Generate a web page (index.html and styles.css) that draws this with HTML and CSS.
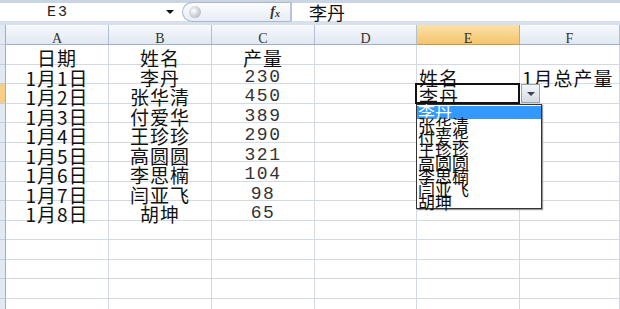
FILE: index.html
```html
<!DOCTYPE html>
<html lang="zh">
<head>
    <meta charset="UTF-8">
    <title>产量表</title>
    <link rel="stylesheet" href="styles.css">
</head>
<body>

  <!-- formula bar -->
  <div class="formula-bar">
    <div class="name-box">
      <span class="cell-ref">E3</span>
      <span class="caret"></span>
    </div>
    <div class="fx-pill">
      <span class="knob"></span>
      <span class="fx">f<span class="fx-x">x</span></span>
    </div>
    <div class="formula">李丹</div>
  </div>

  <!-- sheet -->
  <div class="sheet">
    <div class="row-head"></div>
    <div class="col-head">A</div>
    <div class="col-head">B</div>
    <div class="col-head">C</div>
    <div class="col-head">D</div>
    <div class="col-head active">E</div>
    <div class="col-head">F</div>

    <div class="row-head"></div>
    <div class="cell">日期</div><div class="cell">姓名</div><div class="cell">产量</div>
    <div class="cell"></div><div class="cell"></div><div class="cell"></div>

    <div class="row-head"></div>
    <div class="cell">1月1日</div><div class="cell">李丹</div><div class="cell num">230</div>
    <div class="cell"></div><div class="cell left">姓名</div><div class="cell left">1月总产量</div>

    <div class="row-head active"></div>
    <div class="cell">1月2日</div><div class="cell">张华清</div><div class="cell num">450</div>
    <div class="cell"></div><div class="cell left">李丹</div><div class="cell"></div>

    <div class="row-head"></div>
    <div class="cell">1月3日</div><div class="cell">付爱华</div><div class="cell num">389</div>
    <div class="cell"></div><div class="cell"></div><div class="cell"></div>

    <div class="row-head"></div>
    <div class="cell">1月4日</div><div class="cell">王珍珍</div><div class="cell num">290</div>
    <div class="cell"></div><div class="cell"></div><div class="cell"></div>

    <div class="row-head"></div>
    <div class="cell">1月5日</div><div class="cell">高圆圆</div><div class="cell num">321</div>
    <div class="cell"></div><div class="cell"></div><div class="cell"></div>

    <div class="row-head"></div>
    <div class="cell">1月6日</div><div class="cell">李思楠</div><div class="cell num">104</div>
    <div class="cell"></div><div class="cell"></div><div class="cell"></div>

    <div class="row-head"></div>
    <div class="cell">1月7日</div><div class="cell">闫亚飞</div><div class="cell num">98</div>
    <div class="cell"></div><div class="cell"></div><div class="cell"></div>

    <div class="row-head"></div>
    <div class="cell">1月8日</div><div class="cell">胡坤</div><div class="cell num">65</div>
    <div class="cell"></div><div class="cell"></div><div class="cell"></div>

    <div class="row-head"></div>
    <div class="cell"></div><div class="cell"></div><div class="cell"></div>
    <div class="cell"></div><div class="cell"></div><div class="cell"></div>

    <div class="row-head"></div>
    <div class="cell"></div><div class="cell"></div><div class="cell"></div>
    <div class="cell"></div><div class="cell"></div><div class="cell"></div>

    <div class="row-head"></div>
    <div class="cell"></div><div class="cell"></div><div class="cell"></div>
    <div class="cell"></div><div class="cell"></div><div class="cell"></div>

    <div class="row-head"></div>
    <div class="cell"></div><div class="cell"></div><div class="cell"></div>
    <div class="cell"></div><div class="cell"></div><div class="cell"></div>

    <div class="row-head"></div>
    <div class="cell"></div><div class="cell"></div><div class="cell"></div>
    <div class="cell"></div><div class="cell"></div><div class="cell"></div>

    <!-- data validation dropdown on E3 -->
    <div class="selected-cell"></div>
    <div class="drop-btn"><span class="drop-arrow"></span></div>
    <ul class="drop-list">
      <li class="picked">李丹</li>
      <li>张华清</li>
      <li>付爱华</li>
      <li>王珍珍</li>
      <li>高圆圆</li>
      <li>李思楠</li>
      <li>闫亚飞</li>
      <li>胡坤</li>
    </ul>
  </div>

</body>
</html>
```

FILE: styles.css
```css
html, body {
  margin: 0;
  padding: 0;
}

body {
  background: #ffffff;
  width: 620px;
  height: 309px;
  overflow: hidden;
  font-family: "Noto Sans CJK SC", "Noto Sans", sans-serif;
  color: #111;
}

/* ---------- formula bar ---------- */
.formula-bar {
  display: flex;
  height: 25px;
  box-sizing: border-box;
  border-top: 3px solid #c9d5e5;
  border-bottom: 4px solid #d7e1ee;
  background: #fff;
}

.name-box {
  width: 182px;
  display: flex;
  align-items: center;
}

.cell-ref {
  width: 116px;
  text-align: center;
  font-family: "Liberation Mono", monospace;
  font-size: 15px;
  letter-spacing: 2px;
  color: #222;
}

.caret {
  margin-left: 50px;
  width: 0;
  height: 0;
  border-left: 4px solid transparent;
  border-right: 4px solid transparent;
  border-top: 4px solid #111;
}

.fx-pill {
  width: 110px;
  margin-top: -1px;
  margin-bottom: -1px;
  display: flex;
  align-items: center;
  box-sizing: border-box;
  border: 1px solid #a9b7c9;
  border-right: 2px solid #b8c4d4;
  border-radius: 10px 0 0 10px;
  background: linear-gradient(#fbfcfe, #e7edf5);
}

.knob {
  margin-left: 6px;
  width: 12px;
  height: 12px;
  border-radius: 50%;
  background: radial-gradient(circle at 40% 40%, #ffffff, #c4c9d0 60%, #9aa2ad);
}

.fx {
  margin-left: auto;
  margin-right: 10px;
  font-family: "Liberation Serif", serif;
  font-style: italic;
  font-weight: bold;
  font-size: 14px;
  color: #333;
}

.fx-x {
  font-size: 10px;
  vertical-align: -1px;
}

.formula {
  padding-left: 17px;
  font-size: 18px;
  line-height: 18px;
  color: #111;
}

/* ---------- sheet grid ---------- */
.sheet {
  position: relative;
  display: grid;
  grid-template-columns: 6px 103px 103px 103px 102px 103px 100px;
  grid-template-rows: 20px;
  grid-auto-rows: 19.5px;
}

.col-head {
  box-sizing: border-box;
  border-right: 1px solid #b3c0d2;
  border-bottom: 1px solid #9eb0c9;
  background: linear-gradient(#f7f9fc, #e1e8f2);
  font-family: "Liberation Serif", serif;
  font-size: 14px;
  line-height: 14px;
  padding-top: 7px;
  text-align: center;
  color: #333;
}

.col-head.active {
  background: linear-gradient(#fbe2a9, #f4c46c);
  border-right-color: #d8a957;
  border-bottom-color: #c99a4a;
}

.row-head {
  box-sizing: border-box;
  border-right: 1px solid #9eb0c9;
  border-bottom: 1px solid #c2cfe0;
  background: #e2e9f3;
}

.row-head.active {
  background: #f8cd86;
}

.cell {
  box-sizing: border-box;
  border-right: 1px solid #d2d9e3;
  border-bottom: 1px solid #d2d9e3;
  text-align: center;
  font-size: 19px;
  line-height: 17px;
  padding-top: 4px;
  letter-spacing: 1px;
  white-space: nowrap;
}

.cell.num {
  font-family: "Liberation Mono", monospace;
  font-size: 18px;
  letter-spacing: 1.5px;
  color: #333;
}

.cell.left {
  text-align: left;
  padding-left: 2px;
}

/* ---------- validation dropdown ---------- */
.selected-cell {
  position: absolute;
  left: 415px;
  top: 58px;
  width: 105px;
  height: 21px;
  box-sizing: border-box;
  border: 2px solid #111;
}

.drop-btn {
  position: absolute;
  left: 521px;
  top: 59px;
  width: 19px;
  height: 19px;
  box-sizing: border-box;
  border: 1px solid #9ba5b2;
  background: linear-gradient(#f4f6f9, #d6dbe2);
  display: flex;
  align-items: center;
  justify-content: center;
}

.drop-arrow {
  width: 0;
  height: 0;
  border-left: 4px solid transparent;
  border-right: 4px solid transparent;
  border-top: 4px solid #3a4252;
}

.drop-list {
  position: absolute;
  left: 416px;
  top: 79px;
  width: 126px;
  height: 105px;
  margin: 0;
  padding: 1px 0 0;
  list-style: none;
  box-sizing: border-box;
  border: 1px solid #333;
  background: #fff;
  box-shadow: 1px 1px 1px #999;
}

.drop-list li {
  height: 12.8px;
  font-size: 17px;
  line-height: 12.8px;
  padding-left: 1px;
  white-space: nowrap;
  color: #111;
}

.drop-list li.picked {
  background: #3399ff;
  color: #fff;
}
```
